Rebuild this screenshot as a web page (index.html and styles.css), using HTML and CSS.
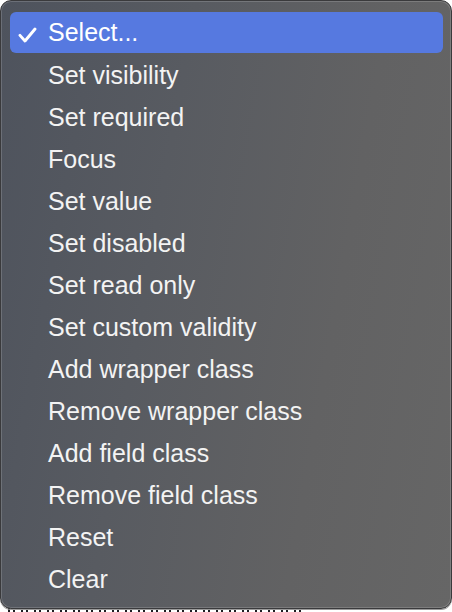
FILE: index.html
```html
<html>
<head>
<meta name="viewport" content="width=device-width, initial-scale=1" />
<title>Action menu</title>
<link rel="stylesheet" href="styles.css">
</head>
<body>

<div class="page">
    <div class="behind"></div>
</div>

<ul class="menu">
    <li class="item selected"><span class="check"><svg width="19" height="16" viewBox="0 0 19 16"><polyline points="2,8.4 7,14 17,2" fill="none" stroke="#fff" stroke-width="2.9" stroke-linecap="round" stroke-linejoin="round"/></svg></span>Select...</li>
    <li class="item"><span class="check"></span>Set visibility</li>
    <li class="item"><span class="check"></span>Set required</li>
    <li class="item"><span class="check"></span>Focus</li>
    <li class="item"><span class="check"></span>Set value</li>
    <li class="item"><span class="check"></span>Set disabled</li>
    <li class="item"><span class="check"></span>Set read only</li>
    <li class="item"><span class="check"></span>Set custom validity</li>
    <li class="item"><span class="check"></span>Add wrapper class</li>
    <li class="item"><span class="check"></span>Remove wrapper class</li>
    <li class="item"><span class="check"></span>Add field class</li>
    <li class="item"><span class="check"></span>Remove field class</li>
    <li class="item"><span class="check"></span>Reset</li>
    <li class="item"><span class="check"></span>Clear</li>
</ul>

</body>
</html>
```

FILE: styles.css
```css
body { margin: 0; background: #fff; font-family: "Liberation Sans", Arial, sans-serif; }
.page { height: 612px; display: flex; flex-direction: column; justify-content: flex-end; overflow: hidden; }
.behind { height: 4px; margin: 0 150px 0 8px; background: repeating-linear-gradient(90deg, #1d1d22 0 2px, transparent 2px 5px, #1d1d22 5px 7px, transparent 7px 13px); }

.menu { position: absolute; top: 0; left: 0; width: 452px; height: 609px; box-sizing: border-box; margin: 0; padding: 11px 8px 0 9px; list-style: none;
    border: 1px solid #3a3a3c; border-radius: 11px;
    background: linear-gradient(100deg, #4e535d 0%, #585b61 35%, #626263 70%, #666 100%);
    box-shadow: inset 0 0 0 1px rgba(255, 255, 255, 0.16), 0 1px 0 #9a9a9a; }
.menu .item { height: 42px; display: flex; align-items: center; padding-left: 9px; font-size: 25px; color: #f3f3f3; border-radius: 6px; white-space: nowrap; }
.menu .item.selected { background: #5679e0; color: #fff; height: 41px; margin-bottom: 1px; }
.menu .check { width: 29px; display: flex; align-items: center; }
.menu .check svg { display: block; margin: 4px 0 0 -1px; }
```
